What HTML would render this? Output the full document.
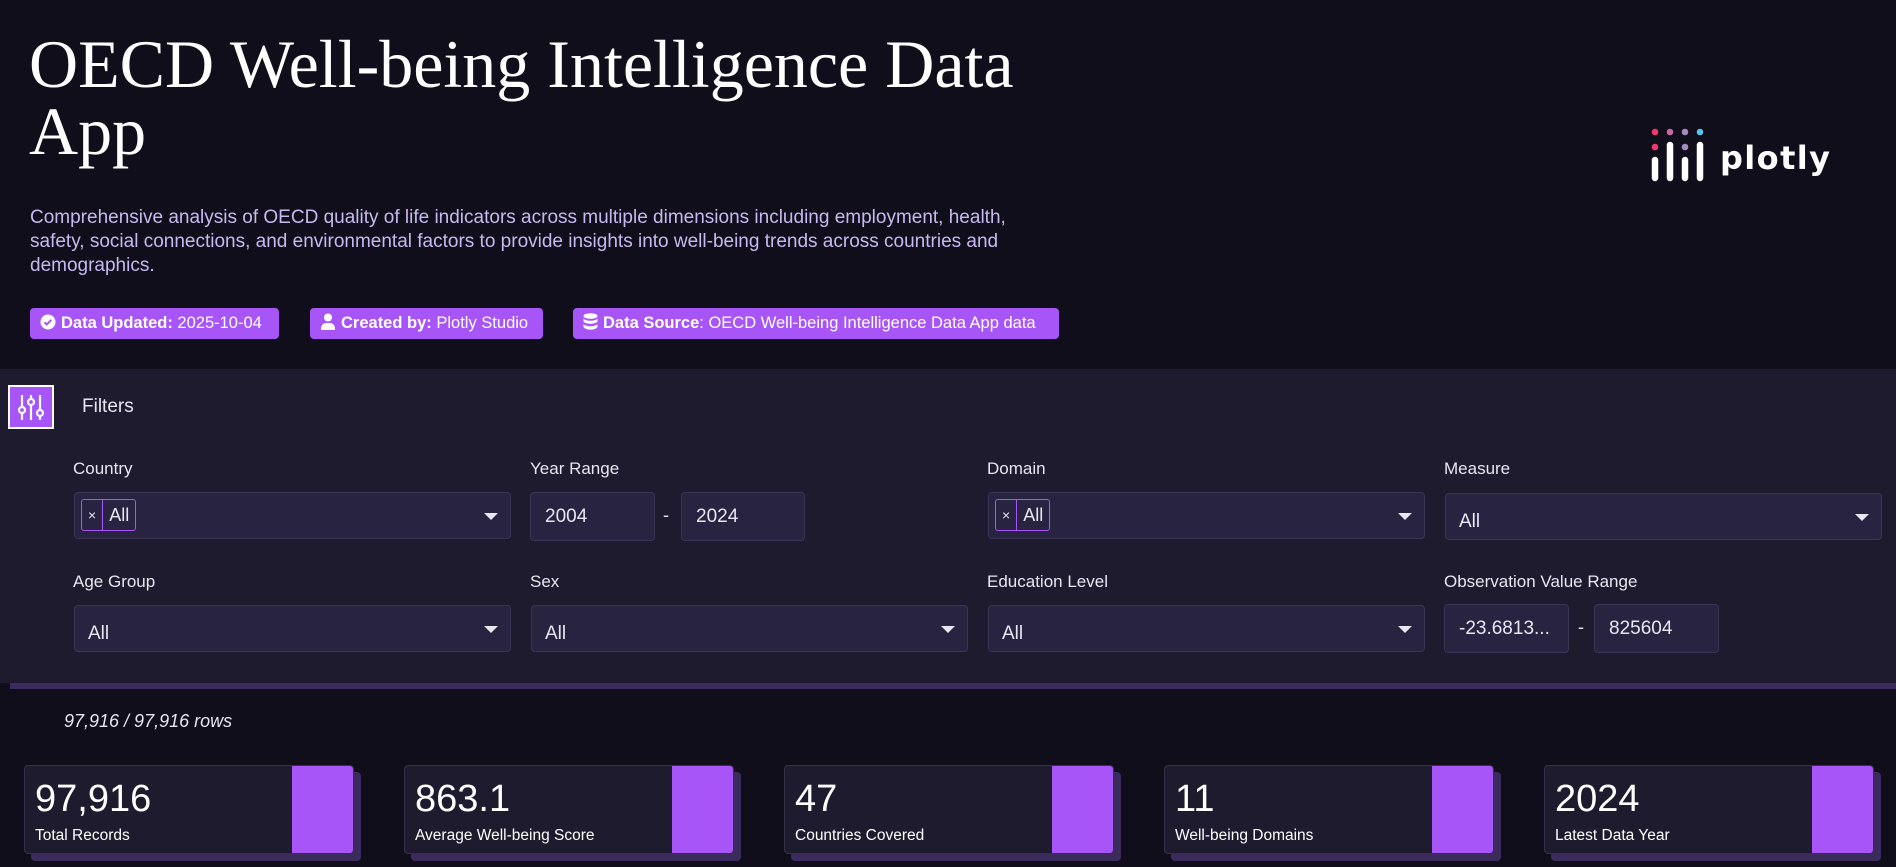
<!DOCTYPE html>
<html><head><meta charset="utf-8"><style>
*{box-sizing:border-box;margin:0;padding:0}
body{width:1896px;height:867px;overflow:hidden;background:#0f0e1a;color:#e8e6f0;font-family:"Liberation Sans",sans-serif;position:relative}
.abs{position:absolute}
h1{position:absolute;left:29px;top:31px;font-family:"Liberation Serif",serif;font-weight:400;font-size:68px;line-height:67px;letter-spacing:0;color:#fff;width:1000px}
.desc{left:30px;top:206px;width:1035px;font-size:19px;line-height:24px;color:#c9b8f0}
.badge{top:308px;height:31px;background:#a855f7;border-radius:4px;color:#fff;font-size:16.5px;line-height:31px;padding-left:10px;white-space:nowrap}
.badge b{font-weight:700}
.panel{left:0;top:369px;width:1896px;height:314px;background:#1e1b2e}
.bar{left:10px;top:683px;width:1886px;height:6px;background:#3b2a5c}
.lbl{font-size:17px;color:#e8e6f0}
.box{background:#272340;border:1px solid #3a3555;border-radius:4px;font-size:19px;color:#e8e6f0}
.caret{position:absolute;right:12px;top:50%;margin-top:-3px;width:0;height:0;border-left:7px solid transparent;border-right:7px solid transparent;border-top:7px solid #e8e6f0}
.dd{height:47px}
.dd .v{position:absolute;left:13px;top:15px}
.tag{position:absolute;left:6px;top:6px;height:32px;border:1px solid #a855f7;border-radius:3px;display:flex;font-size:18px;line-height:30px}
.tag span{padding:0 6px}
.tag span:first-child{border-right:1px solid #a855f7;font-size:14px}
.inp .v{position:absolute;left:14px;top:13px}
.card{top:765px;width:330px;height:89px;background:#1e1b2e;border:1px solid #34304a;border-radius:4px;box-shadow:7px 7px 0 #3b2a5c;overflow:hidden}
.card .n{position:absolute;left:10px;top:12px;font-size:38px;color:#fff}
.card .t{position:absolute;left:10px;top:61px;font-size:15.5px;color:#fff}
.card .p{position:absolute;right:0;top:0;width:61px;height:89px;background:#a855f7}
</style></head><body>
<h1>OECD Well-being Intelligence Data App</h1>
<div class="abs desc">Comprehensive analysis of OECD quality of life indicators across multiple dimensions including employment, health, safety, social connections, and environmental factors to provide insights into well-being trends across countries and demographics.</div>

<svg class="abs" style="left:1650px;top:127px" width="200" height="56" viewBox="0 0 200 56">
<circle cx="5" cy="5" r="3.3" fill="#ef3a6b"/><circle cx="20" cy="5" r="3.3" fill="#c66a9f"/><circle cx="35" cy="5" r="3.3" fill="#a58bc2"/><circle cx="50" cy="5" r="3.3" fill="#56c5e8"/>
<circle cx="5" cy="20" r="3.3" fill="#ef3a6b"/><circle cx="35" cy="20" r="3.3" fill="#a58bc2"/>
<g stroke="#fff" stroke-width="6.5" stroke-linecap="round"><line x1="5" y1="33" x2="5" y2="51"/><line x1="20" y1="18" x2="20" y2="51"/><line x1="35" y1="33" x2="35" y2="51"/><line x1="50" y1="18" x2="50" y2="51"/></g>
<text x="70" y="42" font-family="DejaVu Sans, sans-serif" font-weight="bold" font-size="32" textLength="110" fill="#fff">plotly</text>
</svg>

<div class="abs badge" style="left:30px;width:249px"><svg width="16" height="16" viewBox="0 0 16 16" style="vertical-align:-2px;margin-right:5px"><circle cx="8" cy="8" r="7.5" fill="#fff"/><path d="M4.5 8.2l2.3 2.3 4.5-4.6" stroke="#a855f7" stroke-width="2" fill="none"/></svg><b>Data Updated:</b> 2025-10-04</div>
<div class="abs badge" style="left:310px;width:233px"><svg width="16" height="17" viewBox="0 0 16 17" style="vertical-align:-2px;margin-right:5px"><circle cx="8" cy="4.5" r="4" fill="#fff"/><path d="M1 17v-2a5 5 0 015-5h4a5 5 0 015 5v2z" fill="#fff"/></svg><b>Created by:</b> Plotly Studio</div>
<div class="abs badge" style="left:573px;width:486px"><svg width="15" height="17" viewBox="0 0 15 17" style="vertical-align:-2px;margin-right:5px"><ellipse cx="7.5" cy="3" rx="7" ry="2.8" fill="#fff"/><path d="M.5 5.5c2 3 12 3 14 0v3c-2 3-12 3-14 0zM.5 11c2 3 12 3 14 0v3c-2 3.5-12 3.5-14 0z" fill="#fff"/></svg><b>Data Source</b>: OECD Well-being Intelligence Data App data</div>

<div class="abs panel"></div>
<div class="abs bar"></div>
<div class="abs" style="left:8px;top:385px;width:46px;height:44px;background:#a855f7;border:2px solid #fff">
<svg width="42" height="40" viewBox="0 0 42 40"><g stroke="#fff" stroke-width="2.2" fill="none"><line x1="12" y1="8" x2="12" y2="33"/><line x1="21" y1="8" x2="21" y2="33"/><line x1="30" y1="8" x2="30" y2="33"/></g><g fill="#a855f7" stroke="#fff" stroke-width="2.2"><circle cx="12" cy="23" r="3"/><circle cx="21" cy="15" r="3"/><circle cx="30" cy="26" r="3"/></g></svg></div>
<div class="abs" style="left:82px;top:396px;font-size:19px;color:#e8e6f0">Filters</div>

<div class="abs lbl" style="left:73px;top:459px">Country</div>
<div class="abs lbl" style="left:530px;top:459px">Year Range</div>
<div class="abs lbl" style="left:987px;top:459px">Domain</div>
<div class="abs lbl" style="left:1444px;top:459px">Measure</div>
<div class="abs lbl" style="left:73px;top:572px">Age Group</div>
<div class="abs lbl" style="left:530px;top:572px">Sex</div>
<div class="abs lbl" style="left:987px;top:572px">Education Level</div>
<div class="abs lbl" style="left:1444px;top:572px">Observation Value Range</div>

<div class="abs box dd" style="left:74px;top:492px;width:437px"><div class="tag"><span>×</span><span>All</span></div><div class="caret"></div></div>
<div class="abs box inp dd" style="left:530px;top:492px;width:125px;height:49px"><span class="v">2004</span></div>
<div class="abs" style="left:663px;top:505px;font-size:18px">-</div>
<div class="abs box inp dd" style="left:681px;top:492px;width:124px;height:49px"><span class="v">2024</span></div>
<div class="abs box dd" style="left:988px;top:492px;width:437px"><div class="tag"><span>×</span><span>All</span></div><div class="caret"></div></div>
<div class="abs box dd" style="left:1445px;top:493px;width:437px"><span class="v" style="top:17px">All</span><div class="caret"></div></div>

<div class="abs box dd" style="left:74px;top:605px;width:437px"><span class="v" style="top:17px">All</span><div class="caret"></div></div>
<div class="abs box dd" style="left:531px;top:605px;width:437px"><span class="v" style="top:17px">All</span><div class="caret"></div></div>
<div class="abs box dd" style="left:988px;top:605px;width:437px"><span class="v" style="top:17px">All</span><div class="caret"></div></div>
<div class="abs box inp dd" style="left:1444px;top:604px;width:125px;height:49px"><span class="v">-23.6813...</span></div>
<div class="abs" style="left:1578px;top:617px;font-size:18px">-</div>
<div class="abs box inp dd" style="left:1594px;top:604px;width:125px;height:49px"><span class="v">825604</span></div>

<div class="abs" style="left:64px;top:711px;font-size:18px;font-style:italic;color:#e8e6f0">97,916 / 97,916 rows</div>

<div class="abs card" style="left:24px"><div class="n">97,916</div><div class="t">Total Records</div><div class="p"></div></div>
<div class="abs card" style="left:404px"><div class="n">863.1</div><div class="t">Average Well-being Score</div><div class="p"></div></div>
<div class="abs card" style="left:784px"><div class="n">47</div><div class="t">Countries Covered</div><div class="p"></div></div>
<div class="abs card" style="left:1164px"><div class="n">11</div><div class="t">Well-being Domains</div><div class="p"></div></div>
<div class="abs card" style="left:1544px"><div class="n">2024</div><div class="t">Latest Data Year</div><div class="p"></div></div>
</body></html>
